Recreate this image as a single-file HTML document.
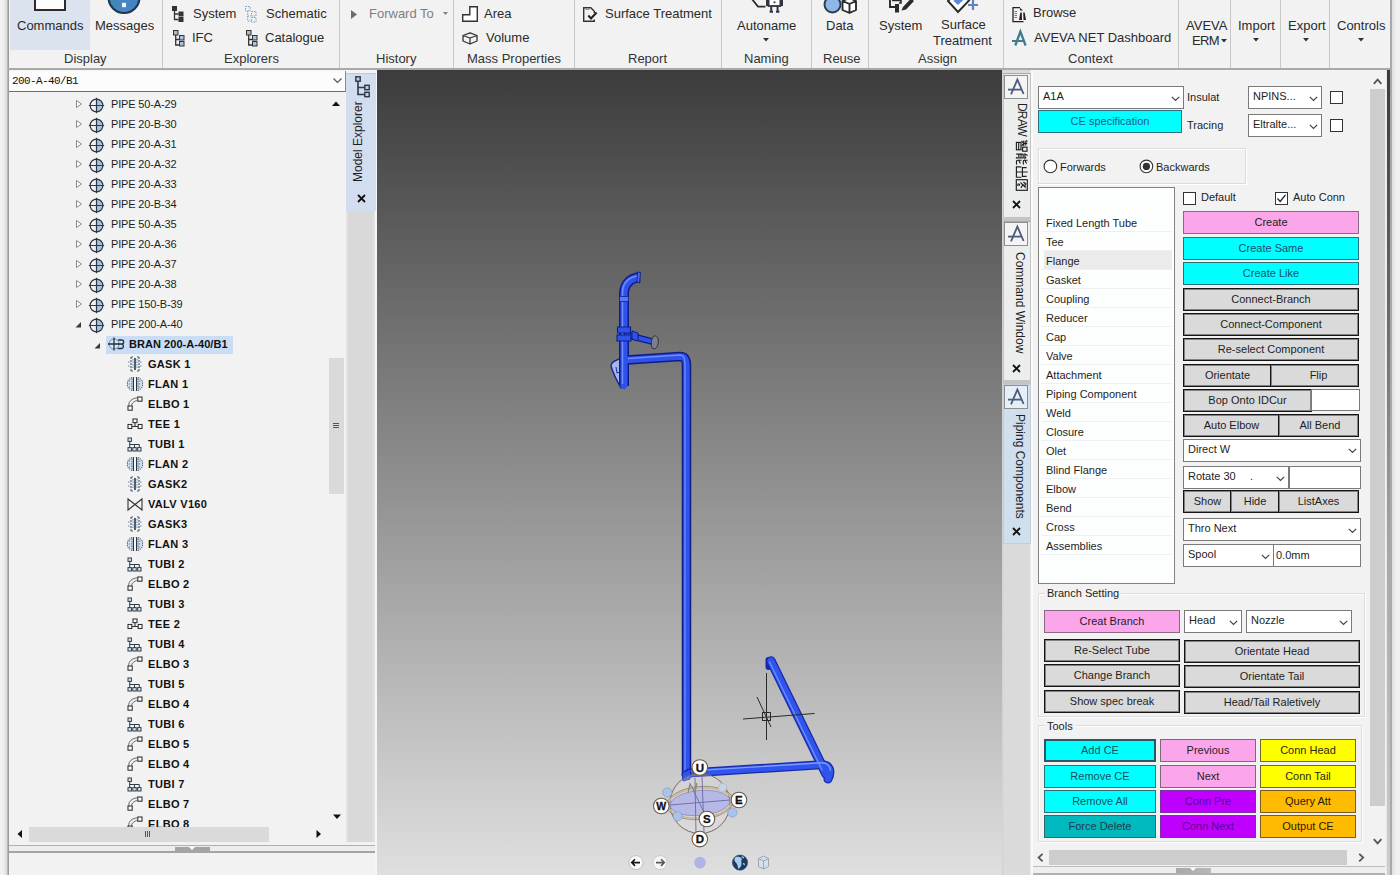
<!DOCTYPE html>
<html><head><meta charset="utf-8"><style>
*{margin:0;padding:0;box-sizing:border-box}
html,body{width:1400px;height:875px;overflow:hidden}
body{position:relative;background:#f2f2f2;font-family:"Liberation Sans",sans-serif;color:#1e1e1e}
.a{position:absolute}
.t{position:absolute;white-space:nowrap;line-height:1}
.rb{font-size:13px;color:#2a2a2a}
.gl{font-size:13px;color:#333}
.sep{position:absolute;top:0;width:1px;height:68px;background:#c8c8c8}
svg{position:absolute;overflow:visible}
.btn{position:absolute;font-size:11px;color:#1e1e1e;text-align:center;white-space:nowrap;line-height:1}
.cb{position:absolute;border:1px solid #7a7a7a;background:#fff}
</style></head><body>
<!-- frame -->
<div class="a" style="left:0;top:0;width:9px;height:875px;background:linear-gradient(90deg,#f3f3f3 0,#f1f1f1 3px,#e4e4e4 5px,#dcdcdc 7px)"></div>
<div class="a" style="left:7px;top:0;width:1px;height:875px;background:#b8b8b8"></div><div class="a" style="left:8px;top:0;width:1px;height:875px;background:#9c9c9c"></div>
<div class="a" style="left:9px;top:0;width:1381px;height:68px;background:#f2f2f2"></div>
<div class="a" style="left:8px;top:68px;width:1384px;height:2px;background:#a9a9a9"></div>
<div class="a" style="left:1390px;top:0;width:2px;height:875px;background:#a9a9a9"></div>
<div class="a" style="left:1392px;top:0;width:8px;height:875px;background:linear-gradient(90deg,#dedede,#f0f0f0 4px)"></div>
<!-- commands highlight -->
<div class="a" style="left:10px;top:0;width:80px;height:50px;background:#dae3ee"></div>
<div class="a" style="left:34px;top:-4px;width:32px;height:15px;border:2px solid #2b2b2b;background:#fdfdfd"></div>
<div class="t rb" style="left:17px;top:19px">Commands</div>
<svg style="left:106px;top:-20px" width="36" height="36"><defs><linearGradient id="mg" x1="0" x2="1"><stop offset="0" stop-color="#3a8aaa"/><stop offset="0.5" stop-color="#4a84c8"/><stop offset="1" stop-color="#3c86b8"/></linearGradient></defs><circle cx="18" cy="17.5" r="15.5" fill="url(#mg)" stroke="#1e3450" stroke-width="2"/><rect x="16" y="17" width="4" height="2" fill="#e8f8fa"/><rect x="16" y="22.8" width="4" height="4.4" fill="#e8f8fa"/></svg>
<div class="t rb" style="left:95px;top:19px">Messages</div>
<div class="t gl" style="left:64px;top:52px">Display</div>
<div class="sep" style="left:162px"></div>

<!-- explorers -->
<svg style="left:172px;top:6px" width="12" height="16"><rect x="0" y="0" width="5" height="5" fill="#333"/><rect x="6.5" y="5.5" width="5" height="5" fill="#333"/><rect x="6.5" y="11" width="5" height="5" fill="#333"/><path d="M2.5 5 V13.5 H6.5 M2.5 8 H6.5" fill="none" stroke="#333" stroke-width="1.3"/></svg>
<div class="t rb" style="left:193px;top:7px">System</div>
<svg style="left:245px;top:6px" width="12" height="16"><rect x="0.5" y="0.5" width="4.5" height="4.5" fill="none" stroke="#7aa0b8" stroke-dasharray="1.5 1"/><path d="M2.7 5 V15 H6 M2.7 10 H6" stroke="#7aa0b8" stroke-width="1" stroke-dasharray="1.5 1" fill="none"/><rect x="6.5" y="5.5" width="4.5" height="4.5" fill="none" stroke="#7aa0b8" stroke-dasharray="1.5 1"/><rect x="6.5" y="11.5" width="4.5" height="4.5" fill="none" stroke="#7aa0b8" stroke-dasharray="1.5 1"/></svg>
<div class="t rb" style="left:266px;top:7px">Schematic</div>
<svg style="left:173px;top:30px" width="12" height="17"><rect x="0.5" y="0.5" width="4.5" height="4.5" fill="#b8b8b8" stroke="#333"/><path d="M2.7 5 V15 H6 M2.7 9.5 H6" stroke="#333" stroke-width="1.3" fill="none"/><rect x="6.5" y="5.5" width="4.5" height="4.5" fill="#a8c4dc" stroke="#333"/><rect x="6.5" y="11.5" width="4.5" height="4.5" fill="#a8c4dc" stroke="#333"/></svg>
<div class="t rb" style="left:192px;top:31px">IFC</div>
<svg style="left:246px;top:30px" width="12" height="17"><rect x="0.5" y="0.5" width="4.5" height="4.5" fill="#b8b8b8" stroke="#333"/><path d="M2.7 5 V15 H6 M2.7 9.5 H6" stroke="#333" stroke-width="1.3" fill="none"/><rect x="6.5" y="5.5" width="4.5" height="4.5" fill="#a8c4dc" stroke="#333"/><rect x="6.5" y="11.5" width="4.5" height="4.5" fill="#a8c4dc" stroke="#333"/></svg>
<div class="t rb" style="left:265px;top:31px">Catalogue</div>
<div class="t gl" style="left:224px;top:52px">Explorers</div>
<div class="sep" style="left:339px"></div>

<!-- history -->
<svg style="left:351px;top:10px" width="8" height="10"><path d="M0 0 L6 4.5 L0 9 Z" fill="#6e6e6e"/></svg>
<div class="t rb" style="left:369px;top:7px;color:#7f7f7f">Forward To</div>
<svg style="left:443px;top:12px" width="6" height="4"><path d="M0 0 H5 L2.5 3 Z" fill="#7f7f7f"/></svg>
<div class="t gl" style="left:376px;top:52px">History</div>
<div class="sep" style="left:453px"></div>

<!-- mass properties -->
<svg style="left:462px;top:6px" width="17" height="17"><path d="M0.7 15.3 V8.7 H7.8 V0.7 H15.3 V15.3 Z" fill="#fff" stroke="#333" stroke-width="1.4"/></svg>
<div class="t rb" style="left:484px;top:7px">Area</div>
<svg style="left:462px;top:32px" width="16" height="13"><path d="M1 3.5 L8 0.8 L15 3.5 V9 L8 12 L1 9 Z M1 3.5 L8 6 L15 3.5 M8 6 V12" fill="none" stroke="#333" stroke-width="1.3" stroke-linejoin="round"/></svg>
<div class="t rb" style="left:486px;top:31px">Volume</div>
<div class="t gl" style="left:467px;top:52px">Mass Properties</div>
<div class="sep" style="left:574px"></div>

<!-- report -->
<svg style="left:583px;top:7px" width="15" height="16"><path d="M11.3 6 V4.2 L7.8 0.7 H0.7 V14.3 H11.3 V12.5" fill="none" stroke="#333" stroke-width="1.4"/><path d="M2.5 2.4 H6.5" stroke="#7a9ab0" stroke-width="1.2"/><path d="M5.3 8.6 L8 11.4 L13.6 5.6" fill="none" stroke="#222" stroke-width="2.1"/></svg>
<div class="t rb" style="left:605px;top:7px">Surface Treatment</div>
<div class="t gl" style="left:628px;top:52px">Report</div>
<div class="sep" style="left:721px"></div>

<!-- naming -->
<svg style="left:750px;top:0" width="34" height="14"><path d="M1.5 -1.5 L8 6.6 H15.5" fill="none" stroke="#2e2e2e" stroke-width="1.8"/><rect x="18.6" y="-3" width="11.8" height="9" fill="#fff" stroke="#2e3640" stroke-width="1.8"/><rect x="16" y="-2" width="2.6" height="8" fill="#2e3640"/><rect x="30.4" y="-2" width="2.6" height="8" fill="#2e3640"/><rect x="23.6" y="1.4" width="1.8" height="1.8" fill="#2e3640"/><path d="M21.2 6 V12 M27.6 6 V12 M19.6 11.8 H23 M26 11.8 H29.4" stroke="#2e3640" stroke-width="2"/></svg>
<div class="t rb" style="left:737px;top:19px">Autoname</div>
<svg style="left:763px;top:38px" width="7" height="4"><path d="M0 0 H6 L3 3.5 Z" fill="#333"/></svg>
<div class="t gl" style="left:744px;top:52px">Naming</div>
<div class="sep" style="left:811px"></div>

<!-- reuse -->
<svg style="left:823px;top:-4px" width="36" height="19"><circle cx="9.5" cy="8.5" r="8" fill="#8fb6e8" stroke="#2b3b4e" stroke-width="1.9"/><path d="M19.5 5 L26.5 2 L33 5 V14 L26.5 17 L19.5 14 Z M19.5 5 L26.5 8 L33 5 M26.5 8 V17" fill="#fff" stroke="#2b2b2b" stroke-width="1.9" stroke-linejoin="round"/></svg>
<div class="t rb" style="left:826px;top:19px">Data</div>
<div class="t gl" style="left:823px;top:52px">Reuse</div>
<div class="sep" style="left:868px"></div>

<!-- assign -->
<svg style="left:889px;top:-3px" width="28" height="16"><path d="M1 0 V10 H8" fill="none" stroke="#2a2a2a" stroke-width="1.9"/><path d="M3 3.5 H12 V6 H10" fill="none" stroke="#2a2a2a" stroke-width="1.6"/><rect x="6" y="7" width="4" height="8.5" fill="#2a2a2a"/><path d="M12.5 13.5 L14 10 L22 1.5 L25 4 L17 12.5 Z" fill="#2a2a2a"/></svg>
<div class="t rb" style="left:879px;top:19px">System</div>
<svg style="left:941px;top:-6px" width="40" height="20"><path d="M7 7 L17 18 L28 6.5 L18 -4 Z" fill="#fff" stroke="#2a2a2a" stroke-width="1.9" stroke-linejoin="miter"/><path d="M12.5 7 L17 11 L24 4.5 L19 0 Z" fill="#5a8ad6"/><path d="M32 6 V16 M27 11 H37" stroke="#5a86c0" stroke-width="2.2"/></svg>
<div class="t rb" style="left:941px;top:18px">Surface</div>
<div class="t rb" style="left:933px;top:34px">Treatment</div>
<div class="t gl" style="left:918px;top:52px">Assign</div>
<div class="sep" style="left:1003px"></div>

<!-- context -->
<svg style="left:1012px;top:7px" width="15" height="16"><path d="M8 0.7 H1 V14.7 H11.5" fill="none" stroke="#222" stroke-width="1.3"/><path d="M8 0.7 V3.5 H11 Z" fill="#222"/><path d="M2.5 4.5 H5 M2.5 6.5 H5 M2.5 8.5 H5 M2.5 10.5 H5" stroke="#5a6a7a" stroke-width="0.9"/><path d="M7 13 L8.3 5.5 H9.8 L10 13 Z M11.5 13 L11.2 5.5 H12.7 L14 13 Z" fill="#222"/></svg>
<div class="t rb" style="left:1033px;top:6px">Browse</div>
<svg style="left:1011px;top:30px" width="17" height="17"><path d="M4.3 15.5 L9.4 1.5 L14.6 15.5" fill="none" stroke="#3e7c90" stroke-width="2.3" stroke-linejoin="miter"/><path d="M1 11 H12" stroke="#3e7c90" stroke-width="2"/></svg>
<div class="t rb" style="left:1034px;top:31px">AVEVA NET Dashboard</div>
<div class="t gl" style="left:1068px;top:52px">Context</div>
<div class="sep" style="left:1178px"></div>

<div class="t rb" style="left:1186px;top:19px">AVEVA</div>
<div class="t rb" style="left:1192px;top:34px;letter-spacing:-0.6px">ERM</div>
<svg style="left:1221px;top:39px" width="7" height="4"><path d="M0 0 H6 L3 3.5 Z" fill="#333"/></svg>
<div class="sep" style="left:1230px"></div>
<div class="t rb" style="left:1238px;top:19px">Import</div>
<svg style="left:1253px;top:38px" width="7" height="4"><path d="M0 0 H6 L3 3.5 Z" fill="#333"/></svg>
<div class="sep" style="left:1280px"></div>
<div class="t rb" style="left:1288px;top:19px">Export</div>
<svg style="left:1303px;top:38px" width="7" height="4"><path d="M0 0 H6 L3 3.5 Z" fill="#333"/></svg>
<div class="sep" style="left:1329px"></div>
<div class="t rb" style="left:1337px;top:19px">Controls</div>
<svg style="left:1358px;top:38px" width="7" height="4"><path d="M0 0 H6 L3 3.5 Z" fill="#333"/></svg>

<div class="a" style="left:9px;top:70px;width:368px;height:805px;background:#f2f2f2"></div>
<div class="a" style="left:9px;top:71px;width:337px;height:21px;background:#fcfcfc;border-right:1px solid #8a8a8a;border-bottom:1px solid #6e6e6e"></div>
<div class="t" style="left:12px;top:76px;font-family:'Liberation Mono',monospace;font-size:11px;color:#111;letter-spacing:-0.6px">200-A-40/B1</div>
<svg style="left:333px;top:78px" width="10" height="6"><path d="M0.5 0.5 L4.5 4.5 L8.5 0.5" fill="none" stroke="#555" stroke-width="1.2"/></svg>
<div class="a" style="left:0;top:0;width:329px;height:827px;overflow:hidden">
<svg style="left:76px;top:100px" width="7" height="9"><path d="M0.5 0.5 L5.5 4 L0.5 7.5 Z" fill="#fff" stroke="#8a8a8a" stroke-width="1"/></svg>
<svg style="left:88px;top:97px" width="17" height="17" viewBox="0 0 16 16"><path d="M8 2 A6 6 0 0 1 8 14 Z" fill="#a9c3de"/><circle cx="8" cy="8" r="6" fill="none" stroke="#2c3846" stroke-width="1.15"/><path d="M0.8 8 H15.2 M8 0.6 V15.4" stroke="#2c3846" stroke-width="1.15"/></svg>
<div class="t" style="left:111px;top:99px;font-size:11px;color:#1e1e1e;letter-spacing:-0.15px">PIPE 50-A-29</div>
<svg style="left:76px;top:120px" width="7" height="9"><path d="M0.5 0.5 L5.5 4 L0.5 7.5 Z" fill="#fff" stroke="#8a8a8a" stroke-width="1"/></svg>
<svg style="left:88px;top:117px" width="17" height="17" viewBox="0 0 16 16"><path d="M8 2 A6 6 0 0 1 8 14 Z" fill="#a9c3de"/><circle cx="8" cy="8" r="6" fill="none" stroke="#2c3846" stroke-width="1.15"/><path d="M0.8 8 H15.2 M8 0.6 V15.4" stroke="#2c3846" stroke-width="1.15"/></svg>
<div class="t" style="left:111px;top:119px;font-size:11px;color:#1e1e1e;letter-spacing:-0.15px">PIPE 20-B-30</div>
<svg style="left:76px;top:140px" width="7" height="9"><path d="M0.5 0.5 L5.5 4 L0.5 7.5 Z" fill="#fff" stroke="#8a8a8a" stroke-width="1"/></svg>
<svg style="left:88px;top:137px" width="17" height="17" viewBox="0 0 16 16"><path d="M8 2 A6 6 0 0 1 8 14 Z" fill="#a9c3de"/><circle cx="8" cy="8" r="6" fill="none" stroke="#2c3846" stroke-width="1.15"/><path d="M0.8 8 H15.2 M8 0.6 V15.4" stroke="#2c3846" stroke-width="1.15"/></svg>
<div class="t" style="left:111px;top:139px;font-size:11px;color:#1e1e1e;letter-spacing:-0.15px">PIPE 20-A-31</div>
<svg style="left:76px;top:160px" width="7" height="9"><path d="M0.5 0.5 L5.5 4 L0.5 7.5 Z" fill="#fff" stroke="#8a8a8a" stroke-width="1"/></svg>
<svg style="left:88px;top:157px" width="17" height="17" viewBox="0 0 16 16"><path d="M8 2 A6 6 0 0 1 8 14 Z" fill="#a9c3de"/><circle cx="8" cy="8" r="6" fill="none" stroke="#2c3846" stroke-width="1.15"/><path d="M0.8 8 H15.2 M8 0.6 V15.4" stroke="#2c3846" stroke-width="1.15"/></svg>
<div class="t" style="left:111px;top:159px;font-size:11px;color:#1e1e1e;letter-spacing:-0.15px">PIPE 20-A-32</div>
<svg style="left:76px;top:180px" width="7" height="9"><path d="M0.5 0.5 L5.5 4 L0.5 7.5 Z" fill="#fff" stroke="#8a8a8a" stroke-width="1"/></svg>
<svg style="left:88px;top:177px" width="17" height="17" viewBox="0 0 16 16"><path d="M8 2 A6 6 0 0 1 8 14 Z" fill="#a9c3de"/><circle cx="8" cy="8" r="6" fill="none" stroke="#2c3846" stroke-width="1.15"/><path d="M0.8 8 H15.2 M8 0.6 V15.4" stroke="#2c3846" stroke-width="1.15"/></svg>
<div class="t" style="left:111px;top:179px;font-size:11px;color:#1e1e1e;letter-spacing:-0.15px">PIPE 20-A-33</div>
<svg style="left:76px;top:200px" width="7" height="9"><path d="M0.5 0.5 L5.5 4 L0.5 7.5 Z" fill="#fff" stroke="#8a8a8a" stroke-width="1"/></svg>
<svg style="left:88px;top:197px" width="17" height="17" viewBox="0 0 16 16"><path d="M8 2 A6 6 0 0 1 8 14 Z" fill="#a9c3de"/><circle cx="8" cy="8" r="6" fill="none" stroke="#2c3846" stroke-width="1.15"/><path d="M0.8 8 H15.2 M8 0.6 V15.4" stroke="#2c3846" stroke-width="1.15"/></svg>
<div class="t" style="left:111px;top:199px;font-size:11px;color:#1e1e1e;letter-spacing:-0.15px">PIPE 20-B-34</div>
<svg style="left:76px;top:220px" width="7" height="9"><path d="M0.5 0.5 L5.5 4 L0.5 7.5 Z" fill="#fff" stroke="#8a8a8a" stroke-width="1"/></svg>
<svg style="left:88px;top:217px" width="17" height="17" viewBox="0 0 16 16"><path d="M8 2 A6 6 0 0 1 8 14 Z" fill="#a9c3de"/><circle cx="8" cy="8" r="6" fill="none" stroke="#2c3846" stroke-width="1.15"/><path d="M0.8 8 H15.2 M8 0.6 V15.4" stroke="#2c3846" stroke-width="1.15"/></svg>
<div class="t" style="left:111px;top:219px;font-size:11px;color:#1e1e1e;letter-spacing:-0.15px">PIPE 50-A-35</div>
<svg style="left:76px;top:240px" width="7" height="9"><path d="M0.5 0.5 L5.5 4 L0.5 7.5 Z" fill="#fff" stroke="#8a8a8a" stroke-width="1"/></svg>
<svg style="left:88px;top:237px" width="17" height="17" viewBox="0 0 16 16"><path d="M8 2 A6 6 0 0 1 8 14 Z" fill="#a9c3de"/><circle cx="8" cy="8" r="6" fill="none" stroke="#2c3846" stroke-width="1.15"/><path d="M0.8 8 H15.2 M8 0.6 V15.4" stroke="#2c3846" stroke-width="1.15"/></svg>
<div class="t" style="left:111px;top:239px;font-size:11px;color:#1e1e1e;letter-spacing:-0.15px">PIPE 20-A-36</div>
<svg style="left:76px;top:260px" width="7" height="9"><path d="M0.5 0.5 L5.5 4 L0.5 7.5 Z" fill="#fff" stroke="#8a8a8a" stroke-width="1"/></svg>
<svg style="left:88px;top:257px" width="17" height="17" viewBox="0 0 16 16"><path d="M8 2 A6 6 0 0 1 8 14 Z" fill="#a9c3de"/><circle cx="8" cy="8" r="6" fill="none" stroke="#2c3846" stroke-width="1.15"/><path d="M0.8 8 H15.2 M8 0.6 V15.4" stroke="#2c3846" stroke-width="1.15"/></svg>
<div class="t" style="left:111px;top:259px;font-size:11px;color:#1e1e1e;letter-spacing:-0.15px">PIPE 20-A-37</div>
<svg style="left:76px;top:280px" width="7" height="9"><path d="M0.5 0.5 L5.5 4 L0.5 7.5 Z" fill="#fff" stroke="#8a8a8a" stroke-width="1"/></svg>
<svg style="left:88px;top:277px" width="17" height="17" viewBox="0 0 16 16"><path d="M8 2 A6 6 0 0 1 8 14 Z" fill="#a9c3de"/><circle cx="8" cy="8" r="6" fill="none" stroke="#2c3846" stroke-width="1.15"/><path d="M0.8 8 H15.2 M8 0.6 V15.4" stroke="#2c3846" stroke-width="1.15"/></svg>
<div class="t" style="left:111px;top:279px;font-size:11px;color:#1e1e1e;letter-spacing:-0.15px">PIPE 20-A-38</div>
<svg style="left:76px;top:300px" width="7" height="9"><path d="M0.5 0.5 L5.5 4 L0.5 7.5 Z" fill="#fff" stroke="#8a8a8a" stroke-width="1"/></svg>
<svg style="left:88px;top:297px" width="17" height="17" viewBox="0 0 16 16"><path d="M8 2 A6 6 0 0 1 8 14 Z" fill="#a9c3de"/><circle cx="8" cy="8" r="6" fill="none" stroke="#2c3846" stroke-width="1.15"/><path d="M0.8 8 H15.2 M8 0.6 V15.4" stroke="#2c3846" stroke-width="1.15"/></svg>
<div class="t" style="left:111px;top:299px;font-size:11px;color:#1e1e1e;letter-spacing:-0.15px">PIPE 150-B-39</div>
<svg style="left:75px;top:322px" width="7" height="6"><path d="M6 0 V5.5 H0.5 Z" fill="#3a3a3a"/></svg>
<svg style="left:88px;top:317px" width="17" height="17" viewBox="0 0 16 16"><path d="M8 2 A6 6 0 0 1 8 14 Z" fill="#a9c3de"/><circle cx="8" cy="8" r="6" fill="none" stroke="#2c3846" stroke-width="1.15"/><path d="M0.8 8 H15.2 M8 0.6 V15.4" stroke="#2c3846" stroke-width="1.15"/></svg>
<div class="t" style="left:111px;top:319px;font-size:11px;color:#1e1e1e;letter-spacing:-0.15px">PIPE 200-A-40</div>
<div class="a" style="left:106px;top:336px;width:127px;height:18px;background:#c9ddf5"></div>
<svg style="left:94px;top:343px" width="7" height="6"><path d="M6 0 V5.5 H0.5 Z" fill="#3a3a3a"/></svg>
<svg style="left:107px;top:336px" width="18" height="16" viewBox="0 0 18 16"><circle cx="7" cy="8" r="5" fill="#d6e8f6" stroke="#6f8ea8" stroke-width="1"/><path d="M1 8 H12 M7 1.5 V14.5" stroke="#24313e" stroke-width="1.3"/><path d="M11 4 H14.5 A2.2 2 0 0 1 14.5 8 H11 M14.5 8 A2.5 2.3 0 0 1 14.5 12.5 H10.5" fill="none" stroke="#24313e" stroke-width="1.3"/></svg>
<div class="t" style="left:129px;top:339px;font-size:11px;font-weight:bold;color:#111;letter-spacing:0.05px">BRAN 200-A-40/B1</div>
<svg style="left:127px;top:356px" width="16" height="16" viewBox="0 0 16 16"><path d="M4 1 V15 M12 1 V15 M4 1 H6 M10 1 H12 M4 15 H6 M10 15 H12" stroke="#4a6278" stroke-width="1.2" stroke-dasharray="2 1"/><path d="M6 3 V13 M10 3 V13 M1 6 H3 M1 10 H3 M13 6 H15 M13 10 H15" stroke="#6a8aa6" stroke-width="1" stroke-dasharray="1.5 1"/><path d="M8 2 V14" stroke="#2a3848" stroke-width="1.6"/></svg>
<div class="t" style="left:148px;top:359px;font-size:11px;font-weight:bold;color:#111;letter-spacing:0.3px">GASK 1</div>
<svg style="left:127px;top:376px" width="16" height="16" viewBox="0 0 16 16"><path d="M5 1.5 C1 3 0 6 0.5 8 C0 10 1 13 5 14.5 Z" fill="#cfe0ee" stroke="#4a6278" stroke-width="1" stroke-dasharray="1.5 0.8"/><path d="M11 1.5 C15 3 16 6 15.5 8 C16 10 15 13 11 14.5 Z" fill="#cfe0ee" stroke="#4a6278" stroke-width="1" stroke-dasharray="1.5 0.8"/><path d="M2 5 H4 M2 8 H4 M2 11 H4 M12 5 H14 M12 8 H14 M12 11 H14" stroke="#5a7890" stroke-width="1" stroke-dasharray="1 1"/><path d="M6.5 1 V15 M9.5 1 V15" stroke="#2a3848" stroke-width="1.2"/><path d="M8 2 V14" stroke="#fff" stroke-width="1.6"/></svg>
<div class="t" style="left:148px;top:379px;font-size:11px;font-weight:bold;color:#111;letter-spacing:0.3px">FLAN 1</div>
<svg style="left:127px;top:396px" width="16" height="16" viewBox="0 0 16 16"><rect x="1" y="10" width="4.2" height="4.2" fill="#fff" stroke="#333" stroke-width="1.1"/><rect x="10.8" y="1" width="4.2" height="4.2" fill="#fff" stroke="#333" stroke-width="1.1"/><path d="M1.6 10 C1.6 5.2 5 2.2 10.8 1.8 M4.6 10 C4.6 7.2 7 4.8 10.8 4.5" fill="none" stroke="#555" stroke-width="0.9"/></svg>
<div class="t" style="left:148px;top:399px;font-size:11px;font-weight:bold;color:#111;letter-spacing:0.3px">ELBO 1</div>
<svg style="left:127px;top:418px" width="16" height="12" viewBox="0 0 16 12"><rect x="6" y="1" width="4" height="3.6" fill="#fff" stroke="#333" stroke-width="1.1"/><rect x="1" y="6.5" width="3.8" height="4" fill="#fff" stroke="#333" stroke-width="1.1"/><rect x="11.2" y="6.5" width="3.8" height="4" fill="#fff" stroke="#333" stroke-width="1.1"/><path d="M8 4.6 V8.5 M4.8 8.5 H11.2" stroke="#333" stroke-width="1.1"/></svg>
<div class="t" style="left:148px;top:419px;font-size:11px;font-weight:bold;color:#111;letter-spacing:0.3px">TEE 1</div>
<svg style="left:127px;top:437px" width="15" height="15" viewBox="0 0 15 15"><rect x="1" y="1" width="3.4" height="3.4" fill="#dfe8f2" stroke="#2e3c4c" stroke-width="1"/><rect x="1" y="10.6" width="3.4" height="3.4" fill="#dfe8f2" stroke="#2e3c4c" stroke-width="1"/><rect x="5.8" y="10.6" width="3.4" height="3.4" fill="#dfe8f2" stroke="#2e3c4c" stroke-width="1"/><rect x="10.6" y="10.6" width="3.4" height="3.4" fill="#dfe8f2" stroke="#2e3c4c" stroke-width="1"/><path d="M2.7 4.4 V10.6 M2.7 7.5 H12.3 V10.6 M7.5 7.5 V10.6" fill="none" stroke="#2e3c4c" stroke-width="1"/></svg>
<div class="t" style="left:148px;top:439px;font-size:11px;font-weight:bold;color:#111;letter-spacing:0.3px">TUBI 1</div>
<svg style="left:127px;top:456px" width="16" height="16" viewBox="0 0 16 16"><path d="M5 1.5 C1 3 0 6 0.5 8 C0 10 1 13 5 14.5 Z" fill="#cfe0ee" stroke="#4a6278" stroke-width="1" stroke-dasharray="1.5 0.8"/><path d="M11 1.5 C15 3 16 6 15.5 8 C16 10 15 13 11 14.5 Z" fill="#cfe0ee" stroke="#4a6278" stroke-width="1" stroke-dasharray="1.5 0.8"/><path d="M2 5 H4 M2 8 H4 M2 11 H4 M12 5 H14 M12 8 H14 M12 11 H14" stroke="#5a7890" stroke-width="1" stroke-dasharray="1 1"/><path d="M6.5 1 V15 M9.5 1 V15" stroke="#2a3848" stroke-width="1.2"/><path d="M8 2 V14" stroke="#fff" stroke-width="1.6"/></svg>
<div class="t" style="left:148px;top:459px;font-size:11px;font-weight:bold;color:#111;letter-spacing:0.3px">FLAN 2</div>
<svg style="left:127px;top:476px" width="16" height="16" viewBox="0 0 16 16"><path d="M4 1 V15 M12 1 V15 M4 1 H6 M10 1 H12 M4 15 H6 M10 15 H12" stroke="#4a6278" stroke-width="1.2" stroke-dasharray="2 1"/><path d="M6 3 V13 M10 3 V13 M1 6 H3 M1 10 H3 M13 6 H15 M13 10 H15" stroke="#6a8aa6" stroke-width="1" stroke-dasharray="1.5 1"/><path d="M8 2 V14" stroke="#2a3848" stroke-width="1.6"/></svg>
<div class="t" style="left:148px;top:479px;font-size:11px;font-weight:bold;color:#111;letter-spacing:0.3px">GASK2</div>
<svg style="left:127px;top:498px" width="16" height="13" viewBox="0 0 16 13"><path d="M1 1 V12 L15 1 V12 Z" fill="none" stroke="#333" stroke-width="1.1" stroke-linejoin="miter"/></svg>
<div class="t" style="left:148px;top:499px;font-size:11px;font-weight:bold;color:#111;letter-spacing:0.3px">VALV V160</div>
<svg style="left:127px;top:516px" width="16" height="16" viewBox="0 0 16 16"><path d="M4 1 V15 M12 1 V15 M4 1 H6 M10 1 H12 M4 15 H6 M10 15 H12" stroke="#4a6278" stroke-width="1.2" stroke-dasharray="2 1"/><path d="M6 3 V13 M10 3 V13 M1 6 H3 M1 10 H3 M13 6 H15 M13 10 H15" stroke="#6a8aa6" stroke-width="1" stroke-dasharray="1.5 1"/><path d="M8 2 V14" stroke="#2a3848" stroke-width="1.6"/></svg>
<div class="t" style="left:148px;top:519px;font-size:11px;font-weight:bold;color:#111;letter-spacing:0.3px">GASK3</div>
<svg style="left:127px;top:536px" width="16" height="16" viewBox="0 0 16 16"><path d="M5 1.5 C1 3 0 6 0.5 8 C0 10 1 13 5 14.5 Z" fill="#cfe0ee" stroke="#4a6278" stroke-width="1" stroke-dasharray="1.5 0.8"/><path d="M11 1.5 C15 3 16 6 15.5 8 C16 10 15 13 11 14.5 Z" fill="#cfe0ee" stroke="#4a6278" stroke-width="1" stroke-dasharray="1.5 0.8"/><path d="M2 5 H4 M2 8 H4 M2 11 H4 M12 5 H14 M12 8 H14 M12 11 H14" stroke="#5a7890" stroke-width="1" stroke-dasharray="1 1"/><path d="M6.5 1 V15 M9.5 1 V15" stroke="#2a3848" stroke-width="1.2"/><path d="M8 2 V14" stroke="#fff" stroke-width="1.6"/></svg>
<div class="t" style="left:148px;top:539px;font-size:11px;font-weight:bold;color:#111;letter-spacing:0.3px">FLAN 3</div>
<svg style="left:127px;top:557px" width="15" height="15" viewBox="0 0 15 15"><rect x="1" y="1" width="3.4" height="3.4" fill="#dfe8f2" stroke="#2e3c4c" stroke-width="1"/><rect x="1" y="10.6" width="3.4" height="3.4" fill="#dfe8f2" stroke="#2e3c4c" stroke-width="1"/><rect x="5.8" y="10.6" width="3.4" height="3.4" fill="#dfe8f2" stroke="#2e3c4c" stroke-width="1"/><rect x="10.6" y="10.6" width="3.4" height="3.4" fill="#dfe8f2" stroke="#2e3c4c" stroke-width="1"/><path d="M2.7 4.4 V10.6 M2.7 7.5 H12.3 V10.6 M7.5 7.5 V10.6" fill="none" stroke="#2e3c4c" stroke-width="1"/></svg>
<div class="t" style="left:148px;top:559px;font-size:11px;font-weight:bold;color:#111;letter-spacing:0.3px">TUBI 2</div>
<svg style="left:127px;top:576px" width="16" height="16" viewBox="0 0 16 16"><rect x="1" y="10" width="4.2" height="4.2" fill="#fff" stroke="#333" stroke-width="1.1"/><rect x="10.8" y="1" width="4.2" height="4.2" fill="#fff" stroke="#333" stroke-width="1.1"/><path d="M1.6 10 C1.6 5.2 5 2.2 10.8 1.8 M4.6 10 C4.6 7.2 7 4.8 10.8 4.5" fill="none" stroke="#555" stroke-width="0.9"/></svg>
<div class="t" style="left:148px;top:579px;font-size:11px;font-weight:bold;color:#111;letter-spacing:0.3px">ELBO 2</div>
<svg style="left:127px;top:597px" width="15" height="15" viewBox="0 0 15 15"><rect x="1" y="1" width="3.4" height="3.4" fill="#dfe8f2" stroke="#2e3c4c" stroke-width="1"/><rect x="1" y="10.6" width="3.4" height="3.4" fill="#dfe8f2" stroke="#2e3c4c" stroke-width="1"/><rect x="5.8" y="10.6" width="3.4" height="3.4" fill="#dfe8f2" stroke="#2e3c4c" stroke-width="1"/><rect x="10.6" y="10.6" width="3.4" height="3.4" fill="#dfe8f2" stroke="#2e3c4c" stroke-width="1"/><path d="M2.7 4.4 V10.6 M2.7 7.5 H12.3 V10.6 M7.5 7.5 V10.6" fill="none" stroke="#2e3c4c" stroke-width="1"/></svg>
<div class="t" style="left:148px;top:599px;font-size:11px;font-weight:bold;color:#111;letter-spacing:0.3px">TUBI 3</div>
<svg style="left:127px;top:618px" width="16" height="12" viewBox="0 0 16 12"><rect x="6" y="1" width="4" height="3.6" fill="#fff" stroke="#333" stroke-width="1.1"/><rect x="1" y="6.5" width="3.8" height="4" fill="#fff" stroke="#333" stroke-width="1.1"/><rect x="11.2" y="6.5" width="3.8" height="4" fill="#fff" stroke="#333" stroke-width="1.1"/><path d="M8 4.6 V8.5 M4.8 8.5 H11.2" stroke="#333" stroke-width="1.1"/></svg>
<div class="t" style="left:148px;top:619px;font-size:11px;font-weight:bold;color:#111;letter-spacing:0.3px">TEE 2</div>
<svg style="left:127px;top:637px" width="15" height="15" viewBox="0 0 15 15"><rect x="1" y="1" width="3.4" height="3.4" fill="#dfe8f2" stroke="#2e3c4c" stroke-width="1"/><rect x="1" y="10.6" width="3.4" height="3.4" fill="#dfe8f2" stroke="#2e3c4c" stroke-width="1"/><rect x="5.8" y="10.6" width="3.4" height="3.4" fill="#dfe8f2" stroke="#2e3c4c" stroke-width="1"/><rect x="10.6" y="10.6" width="3.4" height="3.4" fill="#dfe8f2" stroke="#2e3c4c" stroke-width="1"/><path d="M2.7 4.4 V10.6 M2.7 7.5 H12.3 V10.6 M7.5 7.5 V10.6" fill="none" stroke="#2e3c4c" stroke-width="1"/></svg>
<div class="t" style="left:148px;top:639px;font-size:11px;font-weight:bold;color:#111;letter-spacing:0.3px">TUBI 4</div>
<svg style="left:127px;top:656px" width="16" height="16" viewBox="0 0 16 16"><rect x="1" y="10" width="4.2" height="4.2" fill="#fff" stroke="#333" stroke-width="1.1"/><rect x="10.8" y="1" width="4.2" height="4.2" fill="#fff" stroke="#333" stroke-width="1.1"/><path d="M1.6 10 C1.6 5.2 5 2.2 10.8 1.8 M4.6 10 C4.6 7.2 7 4.8 10.8 4.5" fill="none" stroke="#555" stroke-width="0.9"/></svg>
<div class="t" style="left:148px;top:659px;font-size:11px;font-weight:bold;color:#111;letter-spacing:0.3px">ELBO 3</div>
<svg style="left:127px;top:677px" width="15" height="15" viewBox="0 0 15 15"><rect x="1" y="1" width="3.4" height="3.4" fill="#dfe8f2" stroke="#2e3c4c" stroke-width="1"/><rect x="1" y="10.6" width="3.4" height="3.4" fill="#dfe8f2" stroke="#2e3c4c" stroke-width="1"/><rect x="5.8" y="10.6" width="3.4" height="3.4" fill="#dfe8f2" stroke="#2e3c4c" stroke-width="1"/><rect x="10.6" y="10.6" width="3.4" height="3.4" fill="#dfe8f2" stroke="#2e3c4c" stroke-width="1"/><path d="M2.7 4.4 V10.6 M2.7 7.5 H12.3 V10.6 M7.5 7.5 V10.6" fill="none" stroke="#2e3c4c" stroke-width="1"/></svg>
<div class="t" style="left:148px;top:679px;font-size:11px;font-weight:bold;color:#111;letter-spacing:0.3px">TUBI 5</div>
<svg style="left:127px;top:696px" width="16" height="16" viewBox="0 0 16 16"><rect x="1" y="10" width="4.2" height="4.2" fill="#fff" stroke="#333" stroke-width="1.1"/><rect x="10.8" y="1" width="4.2" height="4.2" fill="#fff" stroke="#333" stroke-width="1.1"/><path d="M1.6 10 C1.6 5.2 5 2.2 10.8 1.8 M4.6 10 C4.6 7.2 7 4.8 10.8 4.5" fill="none" stroke="#555" stroke-width="0.9"/></svg>
<div class="t" style="left:148px;top:699px;font-size:11px;font-weight:bold;color:#111;letter-spacing:0.3px">ELBO 4</div>
<svg style="left:127px;top:717px" width="15" height="15" viewBox="0 0 15 15"><rect x="1" y="1" width="3.4" height="3.4" fill="#dfe8f2" stroke="#2e3c4c" stroke-width="1"/><rect x="1" y="10.6" width="3.4" height="3.4" fill="#dfe8f2" stroke="#2e3c4c" stroke-width="1"/><rect x="5.8" y="10.6" width="3.4" height="3.4" fill="#dfe8f2" stroke="#2e3c4c" stroke-width="1"/><rect x="10.6" y="10.6" width="3.4" height="3.4" fill="#dfe8f2" stroke="#2e3c4c" stroke-width="1"/><path d="M2.7 4.4 V10.6 M2.7 7.5 H12.3 V10.6 M7.5 7.5 V10.6" fill="none" stroke="#2e3c4c" stroke-width="1"/></svg>
<div class="t" style="left:148px;top:719px;font-size:11px;font-weight:bold;color:#111;letter-spacing:0.3px">TUBI 6</div>
<svg style="left:127px;top:736px" width="16" height="16" viewBox="0 0 16 16"><rect x="1" y="10" width="4.2" height="4.2" fill="#fff" stroke="#333" stroke-width="1.1"/><rect x="10.8" y="1" width="4.2" height="4.2" fill="#fff" stroke="#333" stroke-width="1.1"/><path d="M1.6 10 C1.6 5.2 5 2.2 10.8 1.8 M4.6 10 C4.6 7.2 7 4.8 10.8 4.5" fill="none" stroke="#555" stroke-width="0.9"/></svg>
<div class="t" style="left:148px;top:739px;font-size:11px;font-weight:bold;color:#111;letter-spacing:0.3px">ELBO 5</div>
<svg style="left:127px;top:756px" width="16" height="16" viewBox="0 0 16 16"><rect x="1" y="10" width="4.2" height="4.2" fill="#fff" stroke="#333" stroke-width="1.1"/><rect x="10.8" y="1" width="4.2" height="4.2" fill="#fff" stroke="#333" stroke-width="1.1"/><path d="M1.6 10 C1.6 5.2 5 2.2 10.8 1.8 M4.6 10 C4.6 7.2 7 4.8 10.8 4.5" fill="none" stroke="#555" stroke-width="0.9"/></svg>
<div class="t" style="left:148px;top:759px;font-size:11px;font-weight:bold;color:#111;letter-spacing:0.3px">ELBO 4</div>
<svg style="left:127px;top:777px" width="15" height="15" viewBox="0 0 15 15"><rect x="1" y="1" width="3.4" height="3.4" fill="#dfe8f2" stroke="#2e3c4c" stroke-width="1"/><rect x="1" y="10.6" width="3.4" height="3.4" fill="#dfe8f2" stroke="#2e3c4c" stroke-width="1"/><rect x="5.8" y="10.6" width="3.4" height="3.4" fill="#dfe8f2" stroke="#2e3c4c" stroke-width="1"/><rect x="10.6" y="10.6" width="3.4" height="3.4" fill="#dfe8f2" stroke="#2e3c4c" stroke-width="1"/><path d="M2.7 4.4 V10.6 M2.7 7.5 H12.3 V10.6 M7.5 7.5 V10.6" fill="none" stroke="#2e3c4c" stroke-width="1"/></svg>
<div class="t" style="left:148px;top:779px;font-size:11px;font-weight:bold;color:#111;letter-spacing:0.3px">TUBI 7</div>
<svg style="left:127px;top:796px" width="16" height="16" viewBox="0 0 16 16"><rect x="1" y="10" width="4.2" height="4.2" fill="#fff" stroke="#333" stroke-width="1.1"/><rect x="10.8" y="1" width="4.2" height="4.2" fill="#fff" stroke="#333" stroke-width="1.1"/><path d="M1.6 10 C1.6 5.2 5 2.2 10.8 1.8 M4.6 10 C4.6 7.2 7 4.8 10.8 4.5" fill="none" stroke="#555" stroke-width="0.9"/></svg>
<div class="t" style="left:148px;top:799px;font-size:11px;font-weight:bold;color:#111;letter-spacing:0.3px">ELBO 7</div>
<svg style="left:127px;top:816px" width="16" height="16" viewBox="0 0 16 16"><rect x="1" y="10" width="4.2" height="4.2" fill="#fff" stroke="#333" stroke-width="1.1"/><rect x="10.8" y="1" width="4.2" height="4.2" fill="#fff" stroke="#333" stroke-width="1.1"/><path d="M1.6 10 C1.6 5.2 5 2.2 10.8 1.8 M4.6 10 C4.6 7.2 7 4.8 10.8 4.5" fill="none" stroke="#555" stroke-width="0.9"/></svg>
<div class="t" style="left:148px;top:819px;font-size:11px;font-weight:bold;color:#111;letter-spacing:0.3px">ELBO 8</div>
</div>
<!-- v scrollbar -->
<svg style="left:332px;top:101px" width="9" height="6"><path d="M0 5 L4 0.5 L8 5 Z" fill="#111"/></svg>
<div class="a" style="left:329px;top:358px;width:15px;height:136px;background:#dadada"></div>
<div class="a" style="left:333px;top:423px;width:6px;height:1px;background:#555"></div>
<div class="a" style="left:333px;top:425px;width:6px;height:1px;background:#555"></div>
<div class="a" style="left:333px;top:427px;width:6px;height:1px;background:#555"></div>
<svg style="left:333px;top:814px" width="9" height="6"><path d="M0 0.5 L4 5 L8 0.5 Z" fill="#111"/></svg>
<!-- h scrollbar -->
<div class="a" style="left:9px;top:827px;width:337px;height:15px;background:#f2f2f2"></div>
<svg style="left:17px;top:830px" width="6" height="9"><path d="M5 0 L0.5 4 L5 8 Z" fill="#111"/></svg>
<div class="a" style="left:29px;top:827px;width:240px;height:15px;background:#dadada"></div>
<div class="a" style="left:145px;top:831px;width:1px;height:6px;background:#555"></div>
<div class="a" style="left:147px;top:831px;width:1px;height:6px;background:#555"></div>
<div class="a" style="left:149px;top:831px;width:1px;height:6px;background:#555"></div>
<svg style="left:316px;top:830px" width="6" height="9"><path d="M0.5 0 L5 4 L0.5 8 Z" fill="#111"/></svg>
<!-- splitter -->
<div class="a" style="left:9px;top:845px;width:366px;height:1px;background:#b0b0b0"></div>
<div class="a" style="left:9px;top:846px;width:366px;height:5px;background:#ededed"></div>
<div class="a" style="left:9px;top:851px;width:366px;height:2px;background:#a4a4a4"></div>
<div class="a" style="left:175px;top:847px;width:35px;height:5px;background:#a4a4a4"></div>
<svg style="left:189px;top:847px" width="7" height="4"><path d="M0 0 H6 L3 3 Z" fill="#fff"/></svg>
<!-- model explorer tab column -->
<div class="a" style="left:346px;top:71px;width:29px;height:771px;background:linear-gradient(90deg,#e6e6e6,#d9d9d9 3px,#d9d9d9 26px,#e2e2e2)"></div><div class="a" style="left:375px;top:71px;width:2px;height:804px;background:#f6f6f6"></div>
<div class="a" style="left:346px;top:73px;width:30px;height:138px;background:#d3ddf0;border-top:1px solid #c0c8d4"></div>
<div class="a" style="left:346px;top:71px;width:31px;height:2px;background:#f4f4f4"></div>
<svg style="left:355px;top:76px" width="16" height="23"><rect x="0.8" y="0.8" width="4.4" height="4.4" fill="#c0d0e4" stroke="#2a3848" stroke-width="1.4"/><rect x="9.8" y="9.3" width="4.4" height="4.4" fill="#c0d0e4" stroke="#2a3848" stroke-width="1.4"/><rect x="9.8" y="16.3" width="4.4" height="4.4" fill="#c0d0e4" stroke="#2a3848" stroke-width="1.4"/><path d="M3 5.2 V18.5 H9.8 M3 11.5 H9.8" fill="none" stroke="#2a3848" stroke-width="1.6"/></svg>
<div class="t" style="left:352px;top:182px;font-size:12px;color:#1e1e1e;transform:rotate(-90deg);transform-origin:0 0;">Model Explorer</div>
<svg style="left:357px;top:194px" width="9" height="9"><path d="M1 1 L8 8 M8 1 L1 8" stroke="#111" stroke-width="1.8"/></svg>

<div class="a" style="left:377px;top:70px;width:625px;height:805px;background:linear-gradient(180deg,#3c3c3c 0,#dfdfdf 100%)"></div>
<svg style="left:377px;top:70px" width="625" height="805" viewBox="377 70 625 805">
 <defs>
  <radialGradient id="gl" cx="0.35" cy="0.35" r="0.7"><stop offset="0" stop-color="#d6e8f8"/><stop offset="1" stop-color="#5a8ac0"/></radialGradient>
 </defs>
 <!-- support plate -->
 <path d="M611 366 C611 362 614 361 626 356 L627 385 L621 388 C617 381 613 373 611 366 Z" fill="#a6b6e6" stroke="#14208a" stroke-width="1.3" stroke-linejoin="round"/>
 <path d="M616 367 L617 373 L620 372" fill="none" stroke="#1a2a9a" stroke-width="1"/>
 <!-- upper pipes: outline -->
 <g fill="none" stroke-linecap="butt" stroke-linejoin="round">
  <path d="M640 277 C631 278 624 283 624 294 L624 386" stroke="#101c86" stroke-width="10"/>
  <path d="M627 360 L680 356.5 C685 356.5 686.5 360 686.5 366 L686.5 776" stroke="#101c86" stroke-width="9.5"/>
  <path d="M640 277 C631 278 624 283 624 294 L624 386" stroke="#2f52ea" stroke-width="7"/>
  <path d="M627 360 L680 356.5 C685 356.5 686.5 360 686.5 366 L686.5 776" stroke="#2f52ea" stroke-width="6.5"/>
  <path d="M640 275.5 C631 276.5 622.5 281 622.5 293 L622.5 384" stroke="#6c8cff" stroke-width="1.5"/>
  <path d="M628 358.5 L680 355 C684 355 685 358 685 366 L685 770" stroke="#6c8cff" stroke-width="1.3"/>
 </g>
 <path d="M624 386 L620 386 L624 390 L628 386 Z" fill="#2f52ea"/>
 <!-- elbow end cap -->
 <path d="M637.5 272 L640.5 272.5 L639.5 283 L637 282 Z" fill="#4a6af0" stroke="#101c86" stroke-width="0.9"/>
 <!-- flange band -->
 <rect x="619.5" y="296.5" width="9" height="5" rx="1" fill="#5a7af4" stroke="#101c86" stroke-width="0.8"/>
 <!-- valve cluster -->
 <path d="M627 335 L654 342" stroke="#101c86" stroke-width="6.5" stroke-linecap="round"/>
 <path d="M627 335 L654 342" stroke="#2f52ea" stroke-width="4" stroke-linecap="round"/>
 <path d="M617.5 327 H630.5 V333 H617.5 Z M617 335 H631 V341 H617 Z" fill="#2f52ea" stroke="#101c86" stroke-width="1.1"/>
 <path d="M632 331 L638 333 L638 341 L632 339 Z" fill="#2f52ea" stroke="#101c86" stroke-width="1"/>
 <path d="M654 336 C658 335 659 340 658 344 C657 348 655 350 652 348 C651 344 651 338 654 336 Z" fill="#7e7e8e" stroke="#333" stroke-width="1"/>
 <!-- lower pipes -->
 <g fill="none" stroke-linecap="round" stroke-linejoin="round">
  <path d="M771 661 L826 774" stroke="#1828a8" stroke-width="9.5"/><path d="M768.5 660 L768.5 667" stroke="#1828a8" stroke-width="6"/>
  <path d="M689 773 L821 764.8 C829.5 764.3 832 771 828 779" stroke="#1828a8" stroke-width="9"/>
  <path d="M771 661 L826 774" stroke="#2f55ee" stroke-width="7"/>
  <path d="M689 773 L821 764.8 C829.5 764.3 832 771 828 779" stroke="#2f55ee" stroke-width="6.5"/>
  <path d="M769.5 662 L822 770" stroke="#6c8cff" stroke-width="1.4"/>
  <path d="M689 771 L821 762.8 C827 762.5 830 766 830.5 770" stroke="#7c9cff" stroke-width="1.4"/>
 </g>
 <path d="M682 773 L691 769 L690 779 L683 781 Z" fill="#2f55ee" stroke="#1828a8" stroke-width="1"/>
 <!-- crosshair -->
 <g stroke="#2a2a2a" stroke-width="1" fill="none">
  <path d="M743 719 L814.5 713.5"/>
  <path d="M766.5 673 L766.5 740"/>
  <path d="M757 697 L771 727"/>
  <rect x="762.5" y="712.5" width="8" height="8"/>
 </g>
 <!-- compass -->
 <g>
  <circle cx="700" cy="803.5" r="30" fill="rgba(230,230,245,0.25)" stroke="#7a6a5a" stroke-width="1"/>
  <ellipse cx="700" cy="803" rx="32" ry="15" fill="none" stroke="#cdb58e" stroke-width="1.6" transform="rotate(-5 700 803)"/><ellipse cx="700" cy="803" rx="33.5" ry="16.5" fill="none" stroke="#8a7a6a" stroke-width="0.7" transform="rotate(-5 700 803)"/>
  <ellipse cx="700" cy="803" rx="30" ry="12.5" fill="#b6b9e6" stroke="#8a8ab8" stroke-width="0.8" transform="rotate(-5 700 803)"/>
  <path d="M670 805 L730 800" stroke="#6a6aa0" stroke-width="0.9"/>
  <path d="M695 778 L696 835 M702 776 L704 832 M693 790 L708 820" stroke="#6a6aa0" stroke-width="0.9" fill="none"/>
  <path d="M688 793 L690 784 L695 792 L697 783" stroke="#8a8a8a" stroke-width="1.3" fill="none"/>
  <circle cx="667.3" cy="792.5" r="4.6" fill="#a8c4ea" stroke="#8aa0c0" stroke-width="0.8"/>
  <circle cx="677.6" cy="816.3" r="4.6" fill="#a8c4ea" stroke="#8aa0c0" stroke-width="0.8"/>
  <circle cx="732.4" cy="812.5" r="4.6" fill="#a8c4ea" stroke="#8aa0c0" stroke-width="0.8"/>
  <circle cx="722.6" cy="787.6" r="4.2" fill="#c8d4e4" stroke="#aab4c4" stroke-width="0.6"/>
  <g font-family="Liberation Sans" font-weight="bold" font-size="11.5" text-anchor="middle" fill="#111" stroke="#111" stroke-width="0.3">
   <circle cx="699.8" cy="767.5" r="7.8" fill="#fff" stroke="#6a5a4a" stroke-width="1.1"/><text x="699.8" y="771.6">U</text>
   <circle cx="661.3" cy="806" r="7.8" fill="#fff" stroke="#6a5a4a" stroke-width="1.1"/><text x="661.3" y="810.1" font-size="10.5">W</text>
   <circle cx="738.9" cy="800" r="7.8" fill="#fff" stroke="#6a5a4a" stroke-width="1.1"/><text x="738.9" y="804.1">E</text>
   <circle cx="706.9" cy="819" r="7.8" fill="#fff" stroke="#6a5a4a" stroke-width="1.1"/><text x="706.9" y="823.1">S</text>
   <circle cx="699.8" cy="839.1" r="7.8" fill="#fff" stroke="#6a5a4a" stroke-width="1.1"/><text x="699.8" y="843.2">D</text>
  </g>
 </g>
 <!-- nav bar -->
 <circle cx="636" cy="862.6" r="7" fill="#fafafa" stroke="#b8b8b8" stroke-width="0.8"/>
 <path d="M640 862.6 H632 M635 859.3 L631.7 862.6 L635 865.9" stroke="#1a1a1a" stroke-width="1.6" fill="none"/>
 <circle cx="660" cy="862.6" r="7" fill="#f6f6f6" stroke="#c4c4c4" stroke-width="0.8"/>
 <path d="M656 862.6 H664 M661 859.3 L664.3 862.6 L661 865.9" stroke="#5a5a5a" stroke-width="1.6" fill="none"/>
 <circle cx="700" cy="862.6" r="5.8" fill="#b0b2e8"/>
 <circle cx="740" cy="862.6" r="7.6" fill="#1e3a5e" stroke="#2a4a70" stroke-width="0.6"/>
 <path d="M736.5 856.8 C734 857.5 733.8 860.5 735.8 862.5 C737.5 864 737.5 866 738.5 869 C740.5 867.5 742 865 741.5 862.5 C740.5 860.5 742.5 859.5 741.5 858 C740 856.8 738 856.5 736.5 856.8 Z" fill="#a6cdee"/>
 <path d="M741.5 856.3 C743 856 744.5 857 744 858.3 C743 858.6 742 858 741.5 856.3 Z M743 863 C744.5 862.5 745.5 864 744.5 865.5 C743.5 865 743 864 743 863 Z" fill="#a6cdee"/>
 <path d="M758.5 858.5 L763.5 856 L768.5 858.5 V866.5 L763.5 869 L758.5 866.5 Z M758.5 858.5 L763.5 861 L768.5 858.5 M763.5 861 V869" fill="#d4e0ec" stroke="#98a8b8" stroke-width="1" stroke-linejoin="round"/>
</svg>
<!-- right edge gradient strip -->

<div class="a" style="left:1002px;top:70px;width:30px;height:805px;background:linear-gradient(90deg,#d0d0d0 0,#dadada 2px,#dadada 27px,#e8e8e8 29px)"></div>
<!-- DRAW tab -->
<div class="a" style="left:1003px;top:73px;width:28px;height:145px;background:#eceeee;border:1px solid #c4c4c4;border-top-color:#a8a8a8"></div>
<div class="a" style="left:1004px;top:75px;width:24px;height:24px;background:#f4f4f4;border:1px solid #8e8e8e"></div>
<svg style="left:1004px;top:75px" width="24" height="24"><path d="M7 19.4 L13.4 4.6 L19.6 19" fill="none" stroke="#4c5c7e" stroke-width="1.8" stroke-linejoin="miter"/><path d="M4 14.6 H18" stroke="#4c5c7e" stroke-width="1.8"/></svg>
<div class="t" style="left:1028px;top:103px;font-size:12px;letter-spacing:-0.8px;color:#1e1e1e;transform:rotate(90deg);transform-origin:0 0">DRAW</div>
<svg style="left:1028px;top:140px;transform:rotate(90deg);transform-origin:0 0" width="52" height="13"><g fill="none" stroke="#1e1e1e" stroke-width="1.15">
<path d="M1.2 0.5 L0.6 2 M0.8 2.2 H5.6 M0.4 4.2 H6.2 M3.3 0.8 V4.2 L0.8 6.6 M3.4 4.4 L6 6.4"/><rect x="7.2" y="1" width="4" height="4.4"/><rect x="2.4" y="7" width="7.4" height="4.6"/><path d="M2.4 9.3 H9.8"/>
<g transform="translate(13 0)"><path d="M2.4 0.4 L0.9 3.1 H5.2 L4.2 1.9 M1.1 4.8 V11.8 M1.1 4.8 H5 V11.6 L4 11.2 M1.1 7 H5 M1.1 9.2 H5 M7.2 0.4 V3.8 C7.2 4.8 8 4.9 11.6 4.6 M10.6 1.4 L7.4 3 M7.2 6.4 V10.6 C7.2 11.6 8 11.7 11.6 11.4 M10.6 7.6 L7.4 9.2"/></g>
<g transform="translate(26 0)"><path d="M6 0.3 V11.6 M1.6 1.4 V5.6 H10.4 V1.4 M0.8 6.6 V11.6 H11.2 V6.6"/></g>
<g transform="translate(39 0)"><rect x="0.7" y="0.7" width="10.6" height="11"/><path d="M5.2 1.8 L3 4.6 M4.6 2.9 H8.2 L3.4 7.6 M5.2 4.6 L8.8 7.2 M4.8 8.2 L6.8 9 M4.4 9.6 L6.8 10.5"/></g>
</g></svg>
<svg style="left:1012px;top:200px" width="9" height="9"><path d="M1 1 L8 8 M8 1 L1 8" stroke="#111" stroke-width="1.8"/></svg>
<div class="a" style="left:1003px;top:218px;width:28px;height:3px;background:#c4c4c4"></div>
<!-- Command Window tab -->
<div class="a" style="left:1003px;top:221px;width:28px;height:160px;background:#eceeee;border:1px solid #c4c4c4;border-top-color:#a8a8a8"></div>
<div class="a" style="left:1004px;top:222px;width:24px;height:24px;background:#f4f4f4;border:1px solid #8e8e8e"></div>
<svg style="left:1004px;top:222px" width="24" height="24"><path d="M7 19.4 L13.4 4.6 L19.6 19" fill="none" stroke="#4c5c7e" stroke-width="1.8" stroke-linejoin="miter"/><path d="M4 14.6 H18" stroke="#4c5c7e" stroke-width="1.8"/></svg>
<div class="t" style="left:1026px;top:252px;font-size:12px;color:#1e1e1e;transform:rotate(90deg);transform-origin:0 0">Command Window</div>
<svg style="left:1012px;top:364px" width="9" height="9"><path d="M1 1 L8 8 M8 1 L1 8" stroke="#111" stroke-width="1.8"/></svg>
<div class="a" style="left:1003px;top:381px;width:28px;height:3px;background:#c4c4c4"></div>
<!-- Piping Components tab -->
<div class="a" style="left:1003px;top:384px;width:28px;height:160px;background:#cfdfee;border:1px solid #c4ccd8"></div>
<div class="a" style="left:1004px;top:385px;width:24px;height:24px;background:#e6eef8;border:1px solid #8e8e8e"></div>
<svg style="left:1004px;top:385px" width="24" height="24"><path d="M7 19.4 L13.4 4.6 L19.6 19" fill="none" stroke="#4c5c7e" stroke-width="1.8" stroke-linejoin="miter"/><path d="M4 14.6 H18" stroke="#4c5c7e" stroke-width="1.8"/></svg>
<div class="t" style="left:1026px;top:414px;font-size:12px;color:#1e1e1e;transform:rotate(90deg);transform-origin:0 0">Piping Components</div>
<svg style="left:1012px;top:527px" width="9" height="9"><path d="M1 1 L8 8 M8 1 L1 8" stroke="#111" stroke-width="1.8"/></svg>
<div class="a" style="left:1031px;top:70px;width:2px;height:805px;background:#fafafa"></div>

<div class="a" style="left:1033px;top:70px;width:357px;height:805px;background:#f2f2f2"></div>
<div class="a" style="left:1387px;top:70px;width:3px;height:805px;background:linear-gradient(180deg,#3a3a3a 0,#6a6a6a 30%,#a8a8a8 60%,#cecece 100%)"></div>
<div class="a" style="left:1386px;top:70px;width:1px;height:805px;background:#e8e8e8"></div>
<div class="cb" style="left:1038px;top:86px;width:146px;height:23px"></div>
<div class="t" style="left:1043px;top:91.2px;font-size:11px;color:#1e1e1e">A1A</div>
<svg style="left:1171px;top:96px" width="10" height="6"><path d="M0.8 0.8 L4.5 4.5 L8.2 0.8" fill="none" stroke="#444" stroke-width="1.2"/></svg>
<div class="btn" style="left:1038px;top:110px;width:144px;height:23px;background:#00ffff;border:1px solid #2a7080;color:#1e5a8c;display:flex;align-items:center;justify-content:center;padding-bottom:1px">CE specification</div>
<div class="t" style="left:1187px;top:91.7px;font-size:11px;color:#1e1e1e">Insulat</div>
<div class="t" style="left:1187px;top:119.7px;font-size:11px;color:#1e1e1e">Tracing</div>
<div class="cb" style="left:1248px;top:86px;width:74px;height:23px"></div>
<div class="t" style="left:1253px;top:91.2px;font-size:11px;color:#1e1e1e">NPINS...</div>
<svg style="left:1309px;top:96px" width="10" height="6"><path d="M0.8 0.8 L4.5 4.5 L8.2 0.8" fill="none" stroke="#444" stroke-width="1.2"/></svg>
<div class="cb" style="left:1248px;top:114px;width:74px;height:23px"></div>
<div class="t" style="left:1253px;top:119.2px;font-size:11px;color:#1e1e1e">Eltralte...</div>
<svg style="left:1309px;top:124px" width="10" height="6"><path d="M0.8 0.8 L4.5 4.5 L8.2 0.8" fill="none" stroke="#444" stroke-width="1.2"/></svg>
<div class="a" style="left:1330px;top:91px;width:13px;height:13px;border:1px solid #333;background:#fff"></div>
<div class="a" style="left:1330px;top:119px;width:13px;height:13px;border:1px solid #333;background:#fff"></div>
<div class="a" style="left:1038px;top:148px;width:208px;height:36px;border:1px solid #dcdcdc;box-shadow:inset 1px 1px 0 #fff,1px 1px 0 #fff"></div>
<svg style="left:1043px;top:159px" width="16" height="16"><circle cx="7.4" cy="7.4" r="6.3" fill="#fff" stroke="#333" stroke-width="1.1"/></svg>
<div class="t" style="left:1060px;top:161.7px;font-size:11px;color:#1e1e1e">Forwards</div>
<svg style="left:1139px;top:159px" width="16" height="16"><circle cx="7.4" cy="7.4" r="6.3" fill="#fff" stroke="#333" stroke-width="1.1"/><circle cx="7.4" cy="7.4" r="3.6" fill="#333"/></svg>
<div class="t" style="left:1156px;top:161.7px;font-size:11px;color:#1e1e1e">Backwards</div>
<div class="a" style="left:1038px;top:187px;width:137px;height:397px;background:#fdfefe;border:1px solid #828282"></div>
<div class="a" style="left:1044px;top:251px;width:128px;height:18px;background:#ebebeb"></div>
<div class="t" style="left:1046px;top:218.3px;font-size:11px;color:#1e1e1e">Fixed Length Tube</div>
<div class="a" style="left:1041px;top:231px;width:131px;height:1px;background:#f0f0f0"></div>
<div class="t" style="left:1046px;top:237.3px;font-size:11px;color:#1e1e1e">Tee</div>
<div class="a" style="left:1041px;top:250px;width:131px;height:1px;background:#f0f0f0"></div>
<div class="t" style="left:1046px;top:256.3px;font-size:11px;color:#1e1e1e">Flange</div>
<div class="a" style="left:1041px;top:269px;width:131px;height:1px;background:#f0f0f0"></div>
<div class="t" style="left:1046px;top:275.3px;font-size:11px;color:#1e1e1e">Gasket</div>
<div class="a" style="left:1041px;top:288px;width:131px;height:1px;background:#f0f0f0"></div>
<div class="t" style="left:1046px;top:294.3px;font-size:11px;color:#1e1e1e">Coupling</div>
<div class="a" style="left:1041px;top:307px;width:131px;height:1px;background:#f0f0f0"></div>
<div class="t" style="left:1046px;top:313.3px;font-size:11px;color:#1e1e1e">Reducer</div>
<div class="a" style="left:1041px;top:326px;width:131px;height:1px;background:#f0f0f0"></div>
<div class="t" style="left:1046px;top:332.3px;font-size:11px;color:#1e1e1e">Cap</div>
<div class="a" style="left:1041px;top:345px;width:131px;height:1px;background:#f0f0f0"></div>
<div class="t" style="left:1046px;top:351.3px;font-size:11px;color:#1e1e1e">Valve</div>
<div class="a" style="left:1041px;top:364px;width:131px;height:1px;background:#f0f0f0"></div>
<div class="t" style="left:1046px;top:370.3px;font-size:11px;color:#1e1e1e">Attachment</div>
<div class="a" style="left:1041px;top:383px;width:131px;height:1px;background:#f0f0f0"></div>
<div class="t" style="left:1046px;top:389.3px;font-size:11px;color:#1e1e1e">Piping Component</div>
<div class="a" style="left:1041px;top:402px;width:131px;height:1px;background:#f0f0f0"></div>
<div class="t" style="left:1046px;top:408.3px;font-size:11px;color:#1e1e1e">Weld</div>
<div class="a" style="left:1041px;top:421px;width:131px;height:1px;background:#f0f0f0"></div>
<div class="t" style="left:1046px;top:427.3px;font-size:11px;color:#1e1e1e">Closure</div>
<div class="a" style="left:1041px;top:440px;width:131px;height:1px;background:#f0f0f0"></div>
<div class="t" style="left:1046px;top:446.3px;font-size:11px;color:#1e1e1e">Olet</div>
<div class="a" style="left:1041px;top:459px;width:131px;height:1px;background:#f0f0f0"></div>
<div class="t" style="left:1046px;top:465.3px;font-size:11px;color:#1e1e1e">Blind Flange</div>
<div class="a" style="left:1041px;top:478px;width:131px;height:1px;background:#f0f0f0"></div>
<div class="t" style="left:1046px;top:484.3px;font-size:11px;color:#1e1e1e">Elbow</div>
<div class="a" style="left:1041px;top:497px;width:131px;height:1px;background:#f0f0f0"></div>
<div class="t" style="left:1046px;top:503.3px;font-size:11px;color:#1e1e1e">Bend</div>
<div class="a" style="left:1041px;top:516px;width:131px;height:1px;background:#f0f0f0"></div>
<div class="t" style="left:1046px;top:522.3px;font-size:11px;color:#1e1e1e">Cross</div>
<div class="a" style="left:1041px;top:535px;width:131px;height:1px;background:#f0f0f0"></div>
<div class="t" style="left:1046px;top:541.3px;font-size:11px;color:#1e1e1e">Assemblies</div>
<div class="a" style="left:1041px;top:554px;width:131px;height:1px;background:#f0f0f0"></div>
<div class="a" style="left:1183px;top:192px;width:13px;height:13px;border:1px solid #333;background:#fff"></div>
<div class="t" style="left:1201px;top:191.7px;font-size:11px;color:#1e1e1e">Default</div>
<div class="a" style="left:1275px;top:192px;width:13px;height:13px;border:1px solid #333;background:#fff"></div>
<svg style="left:1275px;top:192px" width="13" height="13"><path d="M2.5 6.5 L5.2 9.5 L10.5 2.8" fill="none" stroke="#222" stroke-width="1.3"/></svg>
<div class="t" style="left:1293px;top:191.7px;font-size:11px;color:#1e1e1e">Auto Conn</div>
<div class="btn" style="left:1183px;top:211px;width:176px;height:23px;background:#fba6eb;border:1px solid #8a6a80;color:#1e1e1e;display:flex;align-items:center;justify-content:center;padding-bottom:1px">Create</div>
<div class="btn" style="left:1183px;top:237px;width:176px;height:23px;background:#00ffff;border:1px solid #2a7080;color:#1e4e6e;display:flex;align-items:center;justify-content:center;padding-bottom:1px">Create Same</div>
<div class="btn" style="left:1183px;top:262px;width:176px;height:23px;background:#00ffff;border:1px solid #2a7080;color:#1e4e6e;display:flex;align-items:center;justify-content:center;padding-bottom:1px">Create Like</div>
<div class="btn" style="left:1183px;top:288px;width:176px;height:23px;background:#dadada;border:1px solid #141414;box-shadow:inset 0 0 0 1px rgba(0,0,0,0.4);color:#1e1e1e;display:flex;align-items:center;justify-content:center;padding-bottom:1px">Connect-Branch</div>
<div class="btn" style="left:1183px;top:313px;width:176px;height:23px;background:#dadada;border:1px solid #141414;box-shadow:inset 0 0 0 1px rgba(0,0,0,0.4);color:#1e1e1e;display:flex;align-items:center;justify-content:center;padding-bottom:1px">Connect-Component</div>
<div class="btn" style="left:1183px;top:338px;width:176px;height:23px;background:#dadada;border:1px solid #141414;box-shadow:inset 0 0 0 1px rgba(0,0,0,0.4);color:#1e1e1e;display:flex;align-items:center;justify-content:center;padding-bottom:1px">Re-select Component</div>
<div class="btn" style="left:1183px;top:364px;width:89px;height:23px;background:#dadada;border:1px solid #141414;box-shadow:inset 0 0 0 1px rgba(0,0,0,0.4);color:#1e1e1e;display:flex;align-items:center;justify-content:center;padding-bottom:1px">Orientate</div>
<div class="btn" style="left:1270px;top:364px;width:89px;height:23px;background:#dadada;border:1px solid #141414;box-shadow:inset 0 0 0 1px rgba(0,0,0,0.4);color:#1e1e1e;display:flex;align-items:center;justify-content:center;padding-bottom:1px"><span style='padding-left:8px'>Flip</span></div>
<div class="btn" style="left:1183px;top:389px;width:129px;height:23px;background:#dadada;border:1px solid #141414;box-shadow:inset 0 0 0 1px rgba(0,0,0,0.4);color:#1e1e1e;display:flex;align-items:center;justify-content:center;padding-bottom:1px">Bop Onto IDCur</div>
<div class="a" style="left:1311px;top:389px;width:49px;height:22px;background:#fff;border:1px solid #7a7a7a"></div>
<div class="btn" style="left:1183px;top:414px;width:97px;height:23px;background:#dadada;border:1px solid #141414;box-shadow:inset 0 0 0 1px rgba(0,0,0,0.4);color:#1e1e1e;display:flex;align-items:center;justify-content:center;padding-bottom:1px">Auto Elbow</div>
<div class="btn" style="left:1278px;top:414px;width:81px;height:23px;background:#dadada;border:1px solid #141414;box-shadow:inset 0 0 0 1px rgba(0,0,0,0.4);color:#1e1e1e;display:flex;align-items:center;justify-content:center;padding-bottom:1px"><span style='padding-left:3px'>All Bend</span></div>
<div class="cb" style="left:1183px;top:439px;width:178px;height:23px"></div>
<div class="t" style="left:1188px;top:444.2px;font-size:11px;color:#1e1e1e">Direct W</div>
<svg style="left:1348px;top:448px" width="10" height="6"><path d="M0.8 0.8 L4.5 4.5 L8.2 0.8" fill="none" stroke="#444" stroke-width="1.2"/></svg>
<div class="cb" style="left:1183px;top:466px;width:106px;height:23px"></div>
<div class="t" style="left:1188px;top:471.2px;font-size:11px;color:#1e1e1e">Rotate 30</div>
<svg style="left:1276px;top:476px" width="10" height="6"><path d="M0.8 0.8 L4.5 4.5 L8.2 0.8" fill="none" stroke="#444" stroke-width="1.2"/></svg>
<div class="t" style="left:1250px;top:470.7px;font-size:11px;color:#1e1e1e">.</div>
<div class="a" style="left:1289px;top:466px;width:72px;height:23px;background:#fff;border:1px solid #7a7a7a"></div>
<div class="btn" style="left:1183px;top:490px;width:49px;height:23px;background:#dadada;border:1px solid #141414;box-shadow:inset 0 0 0 1px rgba(0,0,0,0.4);color:#1e1e1e;display:flex;align-items:center;justify-content:center;padding-bottom:1px">Show</div>
<div class="btn" style="left:1230px;top:490px;width:50px;height:23px;background:#dadada;border:1px solid #141414;box-shadow:inset 0 0 0 1px rgba(0,0,0,0.4);color:#1e1e1e;display:flex;align-items:center;justify-content:center;padding-bottom:1px">Hide</div>
<div class="btn" style="left:1278px;top:490px;width:81px;height:23px;background:#dadada;border:1px solid #141414;box-shadow:inset 0 0 0 1px rgba(0,0,0,0.4);color:#1e1e1e;display:flex;align-items:center;justify-content:center;padding-bottom:1px">ListAxes</div>
<div class="cb" style="left:1183px;top:518px;width:178px;height:23px"></div>
<div class="t" style="left:1188px;top:523.2px;font-size:11px;color:#1e1e1e">Thro Next</div>
<svg style="left:1348px;top:528px" width="10" height="6"><path d="M0.8 0.8 L4.5 4.5 L8.2 0.8" fill="none" stroke="#444" stroke-width="1.2"/></svg>
<div class="cb" style="left:1183px;top:544px;width:91px;height:23px"></div>
<div class="t" style="left:1188px;top:549.2px;font-size:11px;color:#1e1e1e">Spool</div>
<svg style="left:1261px;top:554px" width="10" height="6"><path d="M0.8 0.8 L4.5 4.5 L8.2 0.8" fill="none" stroke="#444" stroke-width="1.2"/></svg>
<div class="a" style="left:1273px;top:544px;width:88px;height:23px;background:#fff;border:1px solid #7a7a7a"></div>
<div class="t" style="left:1276px;top:549.7px;font-size:11px;color:#1e1e1e">0.0mm</div>
<div class="a" style="left:1038px;top:593px;width:327px;height:124px;border:1px solid #dcdcdc;box-shadow:inset 1px 1px 0 #fff,1px 1px 0 #fff"></div>
<div class="a" style="left:1045px;top:586px;width:76px;height:12px;background:#f2f2f2"></div>
<div class="t" style="left:1047px;top:587.7px;font-size:11px;color:#1e1e1e">Branch Setting</div>
<div class="btn" style="left:1044px;top:610px;width:136px;height:23px;background:#fba6eb;border:1px solid #8a6a80;color:#1e1e1e;display:flex;align-items:center;justify-content:center;padding-bottom:1px">Creat Branch</div>
<div class="cb" style="left:1184px;top:610px;width:58px;height:23px"></div>
<div class="t" style="left:1189px;top:615.2px;font-size:11px;color:#1e1e1e">Head</div>
<svg style="left:1229px;top:620px" width="10" height="6"><path d="M0.8 0.8 L4.5 4.5 L8.2 0.8" fill="none" stroke="#444" stroke-width="1.2"/></svg>
<div class="cb" style="left:1246px;top:610px;width:106px;height:23px"></div>
<div class="t" style="left:1251px;top:615.2px;font-size:11px;color:#1e1e1e">Nozzle</div>
<svg style="left:1339px;top:620px" width="10" height="6"><path d="M0.8 0.8 L4.5 4.5 L8.2 0.8" fill="none" stroke="#444" stroke-width="1.2"/></svg>
<div class="btn" style="left:1044px;top:639px;width:136px;height:23px;background:#dadada;border:1px solid #141414;box-shadow:inset 0 0 0 1px rgba(0,0,0,0.4);color:#1e1e1e;display:flex;align-items:center;justify-content:center;padding-bottom:1px">Re-Select Tube</div>
<div class="btn" style="left:1184px;top:640px;width:176px;height:23px;background:#dadada;border:1px solid #141414;box-shadow:inset 0 0 0 1px rgba(0,0,0,0.4);color:#1e1e1e;display:flex;align-items:center;justify-content:center;padding-bottom:1px">Orientate Head</div>
<div class="btn" style="left:1044px;top:664px;width:136px;height:23px;background:#dadada;border:1px solid #141414;box-shadow:inset 0 0 0 1px rgba(0,0,0,0.4);color:#1e1e1e;display:flex;align-items:center;justify-content:center;padding-bottom:1px">Change Branch</div>
<div class="btn" style="left:1184px;top:665px;width:176px;height:23px;background:#dadada;border:1px solid #141414;box-shadow:inset 0 0 0 1px rgba(0,0,0,0.4);color:#1e1e1e;display:flex;align-items:center;justify-content:center;padding-bottom:1px">Orientate Tail</div>
<div class="btn" style="left:1044px;top:690px;width:136px;height:23px;background:#dadada;border:1px solid #141414;box-shadow:inset 0 0 0 1px rgba(0,0,0,0.4);color:#1e1e1e;display:flex;align-items:center;justify-content:center;padding-bottom:1px">Show spec break</div>
<div class="btn" style="left:1184px;top:691px;width:176px;height:23px;background:#dadada;border:1px solid #141414;box-shadow:inset 0 0 0 1px rgba(0,0,0,0.4);color:#1e1e1e;display:flex;align-items:center;justify-content:center;padding-bottom:1px">Head/Tail Raletively</div>
<div class="a" style="left:1038px;top:725px;width:324px;height:117px;border:1px solid #dcdcdc;box-shadow:inset 1px 1px 0 #fff,1px 1px 0 #fff"></div>
<div class="a" style="left:1045px;top:719px;width:31px;height:12px;background:#f2f2f2"></div>
<div class="t" style="left:1047px;top:720.7px;font-size:11px;color:#1e1e1e">Tools</div>
<div class="btn" style="left:1044px;top:739px;width:112px;height:23px;background:#00ffff;border:2px solid #2a5a60;color:#1e4e5e;display:flex;align-items:center;justify-content:center;padding-bottom:1px">Add CE</div>
<div class="btn" style="left:1160px;top:739px;width:96px;height:23px;background:#fba6eb;border:1px solid #7a6a78;color:#2a1e2a;display:flex;align-items:center;justify-content:center;padding-bottom:1px">Previous</div>
<div class="btn" style="left:1260px;top:739px;width:96px;height:23px;background:#ffff00;border:1px solid #6a6a30;color:#2a2a10;display:flex;align-items:center;justify-content:center;padding-bottom:1px">Conn Head</div>
<div class="btn" style="left:1044px;top:765px;width:112px;height:23px;background:#00ffff;border:1px solid #2a7080;color:#1e4e5e;display:flex;align-items:center;justify-content:center;padding-bottom:1px">Remove CE</div>
<div class="btn" style="left:1160px;top:765px;width:96px;height:23px;background:#fba6eb;border:1px solid #7a6a78;color:#2a1e2a;display:flex;align-items:center;justify-content:center;padding-bottom:1px">Next</div>
<div class="btn" style="left:1260px;top:765px;width:96px;height:23px;background:#ffff00;border:1px solid #6a6a30;color:#2a2a10;display:flex;align-items:center;justify-content:center;padding-bottom:1px">Conn Tail</div>
<div class="btn" style="left:1044px;top:790px;width:112px;height:23px;background:#00ffff;border:1px solid #2a7080;color:#1e4e5e;display:flex;align-items:center;justify-content:center;padding-bottom:1px">Remove All</div>
<div class="btn" style="left:1160px;top:790px;width:96px;height:23px;background:#bf00ff;border:1px solid #7a30a0;color:#5a0a8a;display:flex;align-items:center;justify-content:center;padding-bottom:1px">Conn Pre</div>
<div class="btn" style="left:1260px;top:790px;width:96px;height:23px;background:#ffbb00;border:1px solid #7a5a20;color:#2a1a0a;display:flex;align-items:center;justify-content:center;padding-bottom:1px">Query Att</div>
<div class="btn" style="left:1044px;top:815px;width:112px;height:23px;background:#00b9be;border:1px solid #2a6a70;color:#1e3e4e;display:flex;align-items:center;justify-content:center;padding-bottom:1px">Force Delete</div>
<div class="btn" style="left:1160px;top:815px;width:96px;height:23px;background:#bf00ff;border:1px solid #7a30a0;color:#5a0a8a;display:flex;align-items:center;justify-content:center;padding-bottom:1px">Conn Next</div>
<div class="btn" style="left:1260px;top:815px;width:96px;height:23px;background:#ffbb00;border:1px solid #7a5a20;color:#2a1a0a;display:flex;align-items:center;justify-content:center;padding-bottom:1px">Output CE</div>
<svg style="left:1373px;top:78px" width="10" height="7"><path d="M0.8 5.8 L4.6 1.6 L8.4 5.8" fill="none" stroke="#555" stroke-width="1.8"/></svg>
<div class="a" style="left:1370px;top:89px;width:15px;height:717px;background:#cdcdcd"></div>
<svg style="left:1373px;top:838px" width="10" height="7"><path d="M0.8 1.2 L4.6 5.4 L8.4 1.2" fill="none" stroke="#555" stroke-width="1.8"/></svg>
<svg style="left:1037px;top:853px" width="7" height="10"><path d="M5.6 0.8 L1.6 4.6 L5.6 8.4" fill="none" stroke="#555" stroke-width="1.8"/></svg>
<div class="a" style="left:1049px;top:850px;width:298px;height:15px;background:#cdcdcd"></div>
<svg style="left:1358px;top:853px" width="7" height="10"><path d="M1.2 0.8 L5.2 4.6 L1.2 8.4" fill="none" stroke="#555" stroke-width="1.8"/></svg>
<div class="a" style="left:1033px;top:866px;width:352px;height:1px;background:#bcbcbc"></div>
<div class="a" style="left:1033px;top:867px;width:352px;height:6px;background:#eeeeee"></div>
<div class="a" style="left:1033px;top:873px;width:352px;height:2px;background:#b0b0b0"></div>
<div class="a" style="left:1176px;top:868px;width:35px;height:5px;background:linear-gradient(90deg,#a8a8a8,#b8b8b8)"></div>
<svg style="left:1190px;top:868px" width="7" height="4"><path d="M0 0 H6 L3 3 Z" fill="#fff"/></svg>
</body></html>
